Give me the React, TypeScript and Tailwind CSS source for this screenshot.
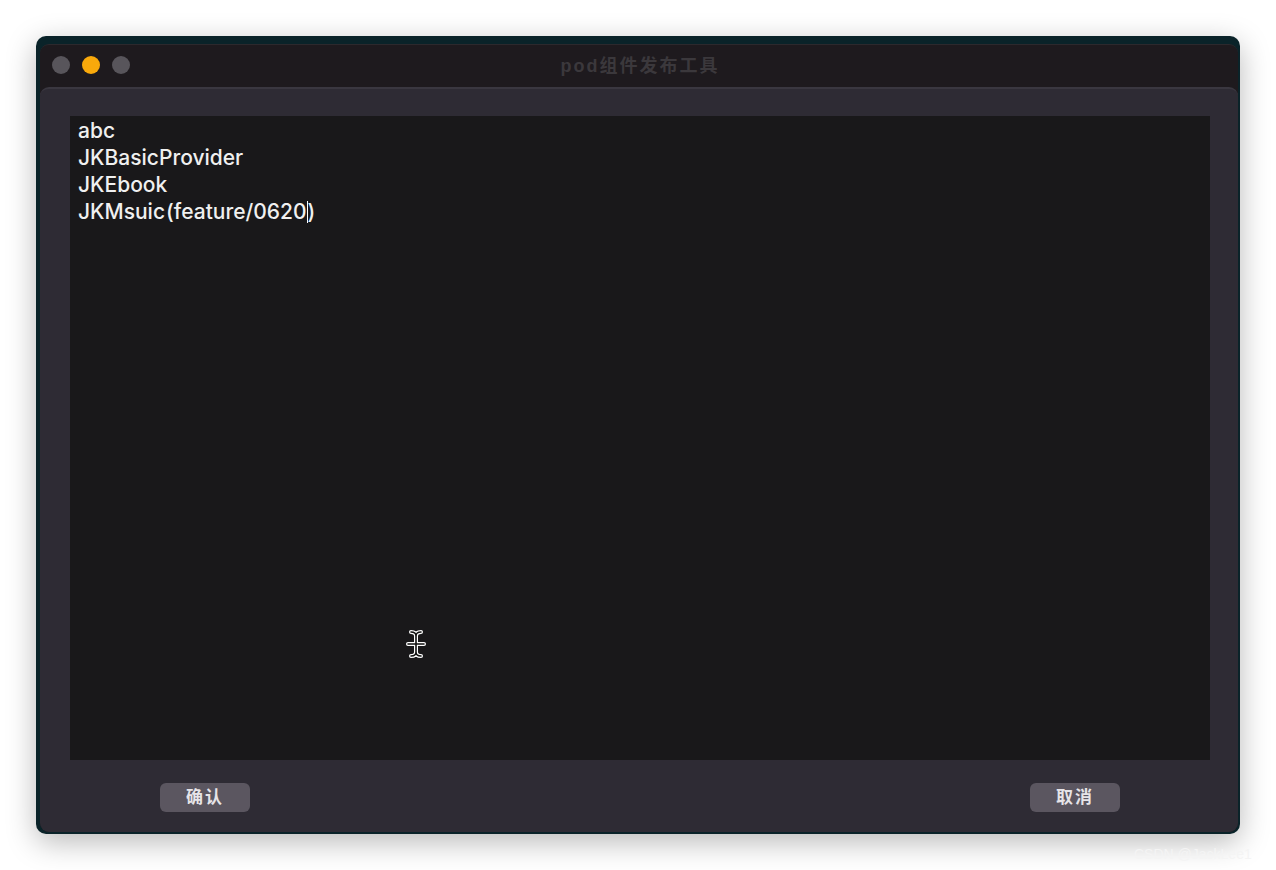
import React from "react";

export default function App() {
  const lines = ["abc", "JKBasicProvider", "JKEbook"];
  const beam = "M7 3 Q12 3 12 7 Q12 3 17 3 M12 7 V23 Q12 27 7 27 M12 23 Q12 27 17 27 M4 15 H20";
  return (
    <div className="w-[1276px] h-[870px] bg-white relative pt-[36px] pl-[36px]" style={{ fontFamily: '"Liberation Sans", "Noto Sans CJK SC", sans-serif' }}>
      <div className="w-[1204px] h-[798px] rounded-[10px] bg-[#0a2329] pt-[8px] pl-[4px] pr-[2px] pb-[2px] shadow-[0_8px_30px_rgba(0,0,0,0.28)]">
        <div className="h-full flex flex-col rounded-[9px] bg-[#1e1a1e] border-t border-[#2c292d]">
          <div className="h-[42px] relative flex items-center justify-center shrink-0">
            <div className="absolute left-[12px] top-[11px] flex gap-[12px]">
              <div className="w-[18px] h-[18px] rounded-full bg-[#58555b]" />
              <div className="w-[18px] h-[18px] rounded-full bg-[#f9a90b]" />
              <div className="w-[18px] h-[18px] rounded-full bg-[#58555b]" />
            </div>
            <span className="text-[18px] font-bold text-[#3b383c] tracking-[2px] pl-[2px]">pod组件发布工具</span>
          </div>
          <div className="flex-1 flex flex-col rounded-[9px] bg-[#2e2b34] border-t-2 border-[#3a3740] pt-[27px] pl-[30px] pr-[28px]">
            <div className="h-[644px] bg-[#19181a] pl-[8px] pt-[1px] text-[#f0f0f0] text-[21px] font-medium leading-[27px] relative" style={{ fontFamily: 'Inter, "Noto Sans", sans-serif' }}>
              {lines.map((l) => (
                <div key={l}>{l}</div>
              ))}
              <div className="flex items-center">
                <span>JKMsuic</span>
                <span className="pl-[1px]">(feature/0620</span>
                <span className="inline-block w-[1px] h-[22px] bg-white" />
                <span>)</span>
              </div>
              <svg className="absolute left-[334px] top-[513px]" width="24" height="30" viewBox="0 0 24 30">
                <path d={beam} fill="none" stroke="#fff" strokeWidth="4" strokeLinecap="round" />
                <path d={beam} fill="none" stroke="#111" strokeWidth="1.6" strokeLinecap="round" />
              </svg>
            </div>
            <div className="flex justify-between pl-[90px] pr-[90px] pt-[23px]">
              <button className="w-[90px] h-[29px] rounded-[6px] bg-[#5b5660] text-[#e6e4e8] text-[17px] font-bold tracking-[2px]">确认</button>
              <button className="w-[90px] h-[29px] rounded-[6px] bg-[#5b5660] text-[#e6e4e8] text-[17px] font-bold tracking-[2px]">取消</button>
            </div>
          </div>
        </div>
      </div>
      <div className="absolute left-[1134px] top-[844px] text-[14px] text-[#f4f4f4]">CSDN @JackLee1</div>
    </div>
  );
}
